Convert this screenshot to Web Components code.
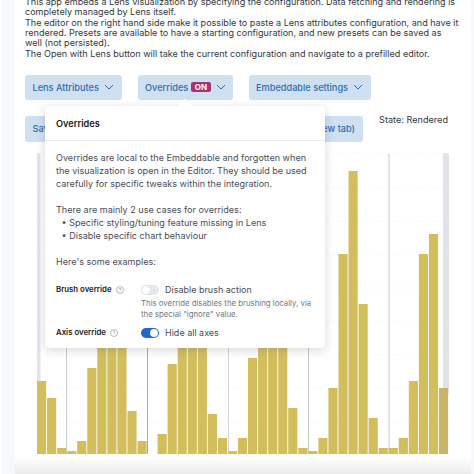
<!DOCTYPE html>
<html lang="en">
<head>
	<meta charset="UTF-8">
	<title>Lens embeddable</title>
	<style>
		html, body { margin: 0; height: 474px; overflow: hidden; background: linear-gradient(90deg, #fff 2px, #f6f8fb 2px); }
		body { font-family: Inter, "Liberation Sans", sans-serif; color: #343741; }
	</style>
</head>
<body>
	<lens-page>
		<intro-text>
			This app embeds a Lens visualization by specifying the configuration. Data fetching and rendering is completely managed by Lens itself.<br>
			The editor on the right hand side make it possible to paste a Lens attributes configuration, and have it rendered. Presets are available to have a starting configuration, and new presets can be saved as well (not persisted).<br>
			The Open with Lens button will take the current configuration and navigate to a prefilled editor.
		</intro-text>
		<control-row slot="controls" style="--row-gap: 15.5px">
			<eui-button caret style="--w: 97px">Lens Attributes</eui-button>
			<eui-button caret style="--w: 95.5px">Overrides <on-badge>ON</on-badge></eui-button>
			<eui-button caret style="--w: 122.5px">Embeddable settings</eui-button>
		</control-row>
		<control-row slot="controls" style="--row-gap: 16px">
			<eui-button style="--w: 120px">Save as preset</eui-button>
			<eui-button style="--w: 202px; --align: flex-end">Open in Lens (new tab)</eui-button>
			<state-label>State: Rendered</state-label>
		</control-row>
		<bar-chart slot="chart"></bar-chart>
		<over-pop slot="popover">
			<span slot="title">Overrides</span>
			<p>Overrides are local to the Embeddable and forgotten when the visualization is open in the Editor. They should be used carefully for specific tweaks within the integration.</p>
			<p>There are mainly 2 use cases for overrides:</p>
			<ul>
				<li>• Specific styling/tuning feature missing in Lens</li>
				<li>• Disable specific chart behaviour</li>
			</ul>
			<p class="last">Here's some examples:</p>
			<form-row label="Brush override" text="Disable brush action" help="This override disables the brushing locally, via the special &quot;ignore&quot; value."></form-row>
			<form-row label="Axis override" text="Hide all axes" checked></form-row>
		</over-pop>
	</lens-page>

	<script>
		// Crea el shadow root de cada componente a partir de su html
		class Base extends HTMLElement {
			constructor(html) {
				super();
				this.attachShadow({mode: 'open'}).innerHTML = html;
			}
		}

		customElements.define('lens-page', class extends Base {
			constructor() {
				super(`<style>
					:host { display: block; position: relative; box-sizing: border-box; width: 456px; height: 474px; margin-left: 15px; padding: 0 10px;
						background: linear-gradient(#fff 456px, #ececec 474px); overflow: hidden; }
					.pop { position: absolute; left: 30px; top: 106px; }
					.top { margin-top: -3px; }
				</style>
				<div class="top"><slot></slot></div>
				<slot name="controls"></slot>
				<slot name="chart"></slot>
				<div class="pop"><slot name="popover"></slot></div>`);
			}
		});

		customElements.define('intro-text', class extends Base {
			constructor() {
				super(`<style>
					:host { display: block; font-size: 9.07px; line-height: 10.35px; color: #343741; width: 434px; }
				</style><slot></slot>`);
			}
		});

		customElements.define('control-row', class extends Base {
			constructor() {
				super(`<style>
					:host { display: flex; gap: 15.5px; margin-top: var(--row-gap); align-items: flex-start; }
				</style><slot></slot>`);
			}
		});

		customElements.define('eui-button', class extends Base {
			constructor() {
				super(`<style>
					:host { display: flex; align-items: center; justify-content: var(--align, flex-start); gap: 4px; box-sizing: border-box; width: var(--w); height: 25.5px; padding: 0 7.5px;
						background: #cfe0f2; border-radius: 3px; color: #2f6cb0; font-size: 9.2px; font-weight: 500; white-space: nowrap; }
					svg { width: 10px; height: 10px; flex: none; margin-left: 1px; }
					div { display: flex; align-items: center; gap: 3px; }
				</style><div><slot></slot></div>`);
				if (this.hasAttribute('caret')) {
					this.shadowRoot.innerHTML += `<svg viewBox="0 0 10 10"><path d="M1 3 L5 7 L9 3" fill="none" stroke="#2f6cb0" stroke-width="1"/></svg>`;
				}
			}
		});

		customElements.define('on-badge', class extends Base {
			constructor() {
				super(`<style>
					:host { display: inline-block; background: #a83272; color: #fff; border-radius: 2px; font-size: 8px; font-weight: 700; line-height: 10px; padding: 0 3.5px; }
				</style><slot></slot>`);
			}
		});

		customElements.define('state-label', class extends Base {
			constructor() {
				super(`<style>
					:host { display: block; margin-left: auto; margin-right: 13px; font-size: 9.15px; line-height: 10px; margin-top: -1px; color: #343741; white-space: nowrap; }
				</style><slot></slot>`);
			}
		});

		customElements.define('over-pop', class extends Base {
			constructor() {
				super(`<style>
					:host { display: block; position: relative; box-sizing: border-box; width: 280px; height: 242px; background: #fff; border-radius: 4px;
						box-shadow: 0 2px 10px rgba(60, 70, 90, .22); }
					.arrow { position: absolute; left: 134px; top: -5px; width: 12px; height: 12px; background: #fff; transform: rotate(45deg); }
					header { position: relative; height: 34px; padding: 0 11px; display: flex; align-items: center; border-bottom: 1px solid #e8ebf0; font-size: 9.2px; font-weight: 600; color: #1a1c21; }
					.body { padding: 10px 11px 0; font-size: 9.07px; line-height: 13px; color: #4a4d57; }
					::slotted(p) { margin: 0 0 13px; }
					::slotted(p.last) { margin-bottom: 15px; }
					::slotted(ul) { margin: -13px 0 13px; padding-left: 5.5px; list-style: none; }
				</style>
				<div class="arrow"></div>
				<header><slot name="title"></slot></header>
				<div class="body"><slot></slot></div>`);
			}
		});

		customElements.define('form-row', class extends Base {
			constructor() {
				super(`<style>
					:host { display: grid; grid-template-columns: 85px 1fr; margin-bottom: 7px; }
					.label { display: flex; align-items: center; gap: 4px; height: 13px; font-size: 7.8px; font-weight: 600; color: #1a1c21; white-space: nowrap; }
					.label svg { width: 8px; height: 8px; }
					.control { display: flex; align-items: center; gap: 6px; height: 13px; font-size: 9px; color: #4a4d57; }
					.switch { position: relative; width: 18px; height: 10px; border-radius: 5px; background: #e4e7ec; }
					.switch i { position: absolute; left: 0; top: 0; width: 10px; height: 10px; box-sizing: border-box; border-radius: 50%; background: #fff; border: 1px solid #dfe3e9; }
					.on .switch { background: #2468c7; }
					.on .switch i { left: 9px; top: 1px; width: 8px; height: 8px; border: 0; }
					.help { font-size: 7.8px; line-height: 10.5px; color: #74777f; margin-top: 2px; white-space: pre-line; }
				</style>
				<div class="label"><span class="name"></span>
					<svg viewBox="0 0 16 16"><circle cx="8" cy="8" r="7" fill="none" stroke="#6a6d77" stroke-width="1"/><path d="M6 6.3 C6 4 10 4 10 6.3 C10 7.8 8 7.8 8 9.5 M8 11 V12" fill="none" stroke="#6a6d77" stroke-width="1"/></svg>
				</div>
				<div>
					<div class="control"><span class="switch"><i></i></span><span class="text"></span></div>
					<div class="help"></div>
				</div>`);
				var root = this.shadowRoot;
				root.querySelector('.name').textContent = this.getAttribute('label');
				root.querySelector('.text').textContent = this.getAttribute('text');
				root.querySelector('.help').textContent = this.getAttribute('help') || '';
				if (!this.hasAttribute('help')) root.querySelector('.help').remove();
				if (this.hasAttribute('checked')) root.querySelector('.control').classList.add('on');
			}
		});

		customElements.define('bar-chart', class extends Base {
			constructor() {
				super(`<style>
					:host { display: block; width: 412px; height: 301px; margin: 11px 0 0 12px; }
					svg { display: block; overflow: visible; }
				</style><svg width="412" height="301" viewBox="0 0 412 301"></svg>`);
				// Parte superior de cada barra en coordenadas de pantalla, 0 = sin barra
				var tops = [381, 398, 448, 451, 441, 368, 300, 300, 300, 411, 441, 0, 434, 364, 300, 300, 300, 414, 438, 451, 438,
					358, 300, 300, 300, 408, 448, 451, 438, 388, 254, 171, 304, 418, 448, 448, 438, 381, 254, 234, 388];
				var y0 = 153, base = 454 - y0, pitch = 412 / 41, out = '';
				out += `<rect x="0" y="0" width="3.5" height="230" fill="#e2e3e8"/><rect x="406" y="0" width="6" height="240" fill="#e2e3e8"/>`;
				for (var y = 1; y < 301; y += 33.5) {
					out += `<line x1="0" x2="412" y1="${y}" y2="${y}" stroke="#eef0f3" stroke-width=".7" stroke-dasharray="2 3"/>`;
				}
				[[29.5, '#c9cacd', 1], [110.5, '#a9abb0', 1], [191.5, '#d3d5da', 1], [271.5, '#c4c6ca', 1], [352, '#dcdde0', 1.5]].forEach(function (l) {
					out += `<line x1="${l[0]}" x2="${l[0]}" y1="0" y2="301" stroke="${l[1]}" stroke-width="${l[2]}"/>`;
				});
				tops.forEach(function (t, i) {
					if (t) out += `<rect x="${(i * pitch).toFixed(2)}" y="${t - y0}" width="${(pitch - 0.9).toFixed(2)}" height="${base - (t - y0)}" fill="${i == 40 ? '#c9b568' : '#d3be5e'}"/>`;
				});
				this.shadowRoot.querySelector('svg').innerHTML = out;
			}
		});
	</script>
</body>
</html>
